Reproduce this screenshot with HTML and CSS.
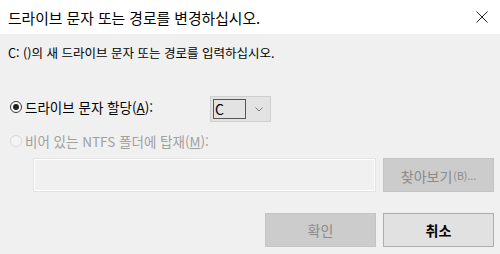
FILE: index.html
```html
<!DOCTYPE html>
<html lang="ko">
<head>
    <meta charset="UTF-8">
    <title>드라이브 문자 또는 경로를 변경하십시오.</title>
    <link rel="stylesheet" href="styles.css">
</head>
<body>
    <div class="titlebar">
        <span class="title">드라이브 문자 또는 경로를 변경하십시오.</span>
        <svg class="close" width="12" height="12" viewBox="0 0 12 12">
            <path d="M0.5 0.5 L11.5 11.5 M11.5 0.5 L0.5 11.5" stroke="#222" stroke-width="1" fill="none"/>
        </svg>
    </div>

    <div class="content">
        <p class="prompt">C: ()의 새 드라이브 문자 또는 경로를 입력하십시오.</p>

        <div class="option">
            <label class="radio-label">
                <span class="radio checked"></span>
                <span>드라이브 문자 할당(<u>A</u>):</span>
            </label>
            <div class="combo">
                <span class="combo-edit">C</span>
                <svg class="chevron" width="8" height="5" viewBox="0 0 8 5">
                    <path d="M0.5 0.5 L4 4 L7.5 0.5" stroke="#777" stroke-width="1" fill="none"/>
                </svg>
            </div>
        </div>

        <div class="option disabled">
            <label class="radio-label">
                <span class="radio"></span>
                <span>비어 있는 NTFS 폴더에 탑재(<u>M</u>):</span>
            </label>
        </div>

        <div class="path-row">
            <div class="path-input"></div>
            <button class="btn btn-disabled btn-browse">찾아보기<span class="small">(B)...</span></button>
        </div>

        <div class="buttons">
            <button class="btn btn-disabled">확인</button>
            <button class="btn btn-cancel">취소</button>
        </div>
    </div>
</body>
</html>
```

FILE: styles.css
```css
* {
    margin: 0;
    padding: 0;
    box-sizing: border-box;
    font-family: "Noto Sans CJK KR", "Noto Sans", sans-serif;
}

body {
    width: 500px;
    height: 254px;
    background-color: #f0f0f0;
    overflow: hidden;
}

.titlebar {
    height: 34px;
    background-color: #ffffff;
    display: flex;
    align-items: center;
    justify-content: space-between;
    padding: 0 12px 0 8px;
}

.title {
    font-size: 14.8px;
    color: #000;
}

.content {
    padding: 10px 6px 0 8px;
}

.prompt {
    font-size: 12.5px;
    color: #000;
    line-height: 18px;
}

.option {
    display: flex;
    align-items: center;
    font-size: 13.5px;
    color: #000;
}

.option:first-of-type {
    margin-top: 34px;
}

.content .option + .option {
    margin-top: 9px;
}

.option.disabled {
    color: #a0a0a0;
}

.radio-label {
    display: flex;
    align-items: center;
    gap: 3px;
    width: 202px;
}

.option:first-of-type .radio-label {
    margin-bottom: 5px;
}

.radio {
    width: 12px;
    height: 12px;
    margin-left: 2px;
    border-radius: 50%;
    border: 1px solid #333;
    background-color: #fff;
    display: flex;
    align-items: center;
    justify-content: center;
}

.radio.checked::after {
    content: "";
    width: 6px;
    height: 6px;
    border-radius: 50%;
    background-color: #222;
}

.disabled .radio {
    border-color: #d8d8d8;
    background-color: #f4f4f4;
}

.combo {
    width: 61px;
    height: 26px;
    background-color: #e3e3e3;
    border: 1px solid #cfcfcf;
    display: flex;
    align-items: center;
    padding: 2px;
    gap: 9px;
}

.combo-edit {
    width: 33px;
    height: 20px;
    border: 1px solid #555;
    background-color: #e3e3e3;
    font-size: 14px;
    line-height: 18px;
    padding-left: 1px;
}

.path-row {
    display: flex;
    align-items: center;
    gap: 8px;
    margin-top: 7px;
    padding-left: 26px;
}

.path-input {
    width: 341px;
    height: 32px;
    border: 1px solid #ffffff;
    outline: 1px solid #e2e2e2;
    background-color: #f0f0f0;
}

.btn {
    width: 111px;
    height: 34px;
    font-size: 14px;
    border: 1px solid transparent;
    display: flex;
    align-items: center;
    justify-content: center;
}

.btn-disabled {
    background-color: #cccccc;
    border-color: #c4c4c4;
    color: #8a8a8a;
}

.btn-browse {
    padding-top: 1px;
}

.btn-browse .small {
    font-size: 10.5px;
    margin-left: 1px;
}

.btn-cancel {
    background-color: #e1e1e1;
    border-color: #adadad;
    color: #000;
    font-weight: bold;
}

.buttons {
    display: flex;
    justify-content: flex-end;
    gap: 7px;
    margin-top: 21px;
}
```
